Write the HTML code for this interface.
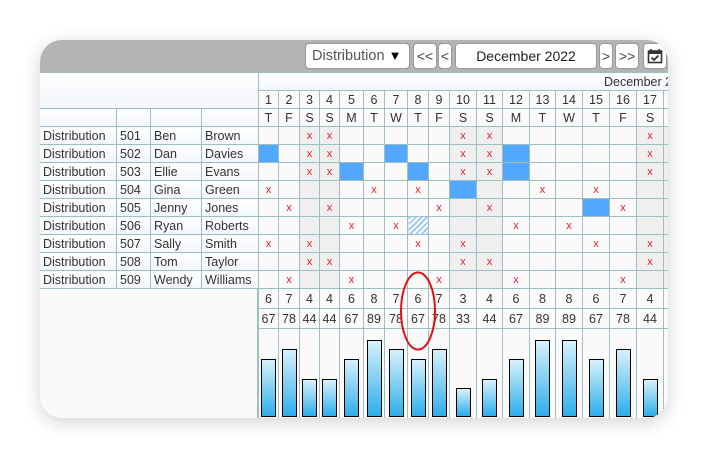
<!DOCTYPE html>
<html><head><meta charset="utf-8"><style>
*{box-sizing:border-box;margin:0;padding:0}
body{width:709px;height:458px;background:#fff;font-family:"Liberation Sans",sans-serif;position:relative;overflow:hidden}
#card{position:absolute;left:40px;top:40px;width:628px;height:378px;border-radius:22px;overflow:hidden;background:#fafafa;box-shadow:0 4px 18px rgba(0,0,0,.18)}
#bar{position:absolute;left:0;top:0;width:628px;height:32px;background:#b4b4b4}
.btn{position:absolute;top:3px;height:26px;background:#fff;border:1px solid #999;border-radius:4px;font-size:14px;color:#444;text-align:center;line-height:24px}
table{border-collapse:collapse;table-layout:fixed;position:absolute}
td{border:1px solid #9dbfc3;font-size:12.5px;color:#333;text-align:center;height:18px;padding:0;white-space:nowrap;overflow:hidden;line-height:16px}
#lt td{text-align:left;padding-left:3px;background:linear-gradient(#fff,#f2f5fb)}
.w{background:#efefef}
.x{color:#e0202a;font-size:11px}
.b{background:#52a8ff}
.h{background:repeating-linear-gradient(135deg,#9fcaf5 0 2px,#fff 2px 4px)}
.bars td{height:90px;vertical-align:bottom;padding-bottom:1px}
.bars div{width:15px;margin:0 auto;border:1.5px solid #000;background:linear-gradient(#d8f1fc,#2caeea)}
</style></head><body>
<div id="card">
<div id="bar"></div>
<div class="btn" style="left:265px;width:105px;text-align:left;padding-left:6px;color:#555;font-size:14.5px">Distribution <span style="font-size:13px;color:#000">&#9660;</span></div>
<div class="btn" style="left:373px;width:24px">&lt;&lt;</div>
<div class="btn" style="left:398px;width:14px">&lt;</div>
<div class="btn" style="left:415px;width:142px;color:#222">December 2022</div>
<div class="btn" style="left:559px;width:14px">&gt;</div>
<div class="btn" style="left:575px;width:24px">&gt;&gt;</div>
<div class="btn" style="left:603px;width:24px"><svg width="16" height="16" viewBox="0 0 16 16" style="margin-top:4px"><rect x="1.5" y="3" width="13" height="11.5" fill="none" stroke="#333" stroke-width="1.6"/><rect x="1.5" y="3" width="13" height="3" fill="#333"/><path d="M4 1v3M12 1v3" stroke="#333" stroke-width="1.6"/><path d="M4.5 9.5l2.5 2.5 4.5-4.5" fill="none" stroke="#333" stroke-width="1.8"/></svg></div>

<div style="position:absolute;left:0;top:32px;width:218px;height:37px;background:linear-gradient(#fff,#f2f5fb);border-top:1px solid #9dbfc3"></div>
<table id="lt" style="left:-1px;top:68px;width:219px">
<colgroup><col style="width:77px"><col style="width:34px"><col style="width:51px"><col style="width:57px"></colgroup>
<tr><td></td><td></td><td></td><td></td></tr>
<tr><td>Distribution</td><td>501</td><td>Ben</td><td>Brown</td></tr>
<tr><td>Distribution</td><td>502</td><td>Dan</td><td>Davies</td></tr>
<tr><td>Distribution</td><td>503</td><td>Ellie</td><td>Evans</td></tr>
<tr><td>Distribution</td><td>504</td><td>Gina</td><td>Green</td></tr>
<tr><td>Distribution</td><td>505</td><td>Jenny</td><td>Jones</td></tr>
<tr><td>Distribution</td><td>506</td><td>Ryan</td><td>Roberts</td></tr>
<tr><td>Distribution</td><td>507</td><td>Sally</td><td>Smith</td></tr>
<tr><td>Distribution</td><td>508</td><td>Tom</td><td>Taylor</td></tr>
<tr><td>Distribution</td><td>509</td><td>Wendy</td><td>Williams</td></tr>
</table>

<table style="left:218px;top:32px;width:432px">
<colgroup><col style="width:20px"><col style="width:21px"><col style="width:20px"><col style="width:20px"><col style="width:24px"><col style="width:21px"><col style="width:23px"><col style="width:21px"><col style="width:21px"><col style="width:27px"><col style="width:26px"><col style="width:27px"><col style="width:26px"><col style="width:27px"><col style="width:27px"><col style="width:27px"><col style="width:27px"><col style="width:27px"></colgroup>
<tr><td colspan="18" style="text-align:left;padding-left:345px;background:linear-gradient(#fff,#f2f5fb)">December 2022</td></tr>
<tr><td>1</td><td>2</td><td>3</td><td>4</td><td>5</td><td>6</td><td>7</td><td>8</td><td>9</td><td>10</td><td>11</td><td>12</td><td>13</td><td>14</td><td>15</td><td>16</td><td>17</td><td>18</td></tr>
<tr><td>T</td><td>F</td><td>S</td><td>S</td><td>M</td><td>T</td><td>W</td><td>T</td><td>F</td><td>S</td><td>S</td><td>M</td><td>T</td><td>W</td><td>T</td><td>F</td><td>S</td><td>S</td></tr>
<tr><td></td><td></td><td class="w x">x</td><td class="w x">x</td><td></td><td></td><td></td><td></td><td></td><td class="w x">x</td><td class="w x">x</td><td></td><td></td><td></td><td></td><td></td><td class="w x">x</td><td class="w"></td></tr>
<tr><td class="b"></td><td></td><td class="w x">x</td><td class="w x">x</td><td></td><td></td><td class="b"></td><td></td><td></td><td class="w x">x</td><td class="w x">x</td><td class="b"></td><td></td><td></td><td></td><td></td><td class="w x">x</td><td class="w"></td></tr>
<tr><td></td><td></td><td class="w x">x</td><td class="w x">x</td><td class="b"></td><td></td><td></td><td class="b"></td><td></td><td class="w x">x</td><td class="w x">x</td><td class="b"></td><td></td><td></td><td></td><td></td><td class="w x">x</td><td class="w"></td></tr>
<tr><td class="x">x</td><td></td><td class="w"></td><td class="w"></td><td></td><td class="x">x</td><td></td><td class="x">x</td><td></td><td class="b"></td><td class="w"></td><td></td><td class="x">x</td><td></td><td class="x">x</td><td></td><td class="w"></td><td class="w"></td></tr>
<tr><td></td><td class="x">x</td><td class="w"></td><td class="w x">x</td><td></td><td></td><td></td><td></td><td class="x">x</td><td class="w"></td><td class="w x">x</td><td></td><td></td><td></td><td class="b"></td><td class="x">x</td><td class="w"></td><td class="w"></td></tr>
<tr><td></td><td></td><td class="w"></td><td class="w"></td><td class="x">x</td><td></td><td class="x">x</td><td class="h"></td><td></td><td class="w"></td><td class="w"></td><td class="x">x</td><td></td><td class="x">x</td><td></td><td></td><td class="w"></td><td class="w"></td></tr>
<tr><td class="x">x</td><td></td><td class="w x">x</td><td class="w"></td><td></td><td></td><td></td><td class="x">x</td><td></td><td class="w x">x</td><td class="w"></td><td></td><td></td><td></td><td class="x">x</td><td></td><td class="w x">x</td><td class="w"></td></tr>
<tr><td></td><td></td><td class="w x">x</td><td class="w x">x</td><td></td><td></td><td></td><td></td><td></td><td class="w x">x</td><td class="w x">x</td><td></td><td></td><td></td><td></td><td></td><td class="w x">x</td><td class="w"></td></tr>
<tr><td></td><td class="x">x</td><td class="w"></td><td class="w"></td><td class="x">x</td><td></td><td></td><td></td><td class="x">x</td><td class="w"></td><td class="w"></td><td class="x">x</td><td></td><td></td><td></td><td class="x">x</td><td class="w"></td><td class="w"></td></tr>
<tr style="height:20px"><td style="height:20px">6</td><td>7</td><td>4</td><td>4</td><td>6</td><td>8</td><td>7</td><td>6</td><td>7</td><td>3</td><td>4</td><td>6</td><td>8</td><td>8</td><td>6</td><td>7</td><td>4</td><td></td></tr>
<tr><td style="height:20px">67</td><td>78</td><td>44</td><td>44</td><td>67</td><td>89</td><td>78</td><td>67</td><td>78</td><td>33</td><td>44</td><td>67</td><td>89</td><td>89</td><td>67</td><td>78</td><td>44</td><td></td></tr>
<tr class="bars"><td><div style="height:58px"></div></td><td><div style="height:68px"></div></td><td><div style="height:38px"></div></td><td><div style="height:38px"></div></td><td><div style="height:58px"></div></td><td><div style="height:77px"></div></td><td><div style="height:68px"></div></td><td><div style="height:58px"></div></td><td><div style="height:68px"></div></td><td><div style="height:29px"></div></td><td><div style="height:38px"></div></td><td><div style="height:58px"></div></td><td><div style="height:77px"></div></td><td><div style="height:77px"></div></td><td><div style="height:58px"></div></td><td><div style="height:68px"></div></td><td><div style="height:38px"></div></td><td></td></tr>
</table>
<div style="position:absolute;left:217px;top:248px;width:1px;height:130px;background:#9dbfc3"></div>
</div>
<svg style="position:absolute;left:0;top:0" width="709" height="458"><ellipse cx="418" cy="311" rx="17" ry="38.5" fill="none" stroke="#e01010" stroke-width="2"/></svg>
</body></html>
